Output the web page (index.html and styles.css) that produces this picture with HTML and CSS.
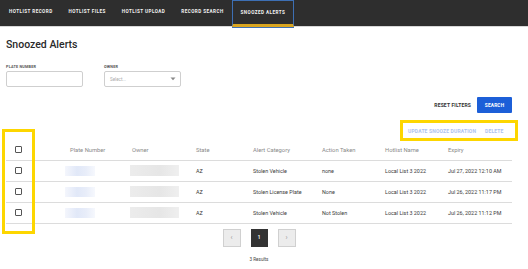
FILE: index.html
```html
<!DOCTYPE html>
<html lang="en">

<head>
    <meta charset="UTF-8">
    <meta name="viewport" content="width=device-width, initial-scale=1.0">
    <title>Snoozed Alerts</title>
    <link rel="stylesheet" href="styles.css">
</head>

<body>
    <!-- Top navigation -->
    <nav class="tabs">
        <a class="tab">HOTLIST RECORD</a>
        <a class="tab">HOTLIST FILES</a>
        <a class="tab">HOTLIST UPLOAD</a>
        <a class="tab">RECORD SEARCH</a>
        <a class="tab active">SNOOZED ALERTS</a>
    </nav>

    <div class="page">
        <h1 class="page-title">Snoozed Alerts</h1>

        <!-- Filters -->
        <div class="filters">
            <div class="field">
                <label for="plate">PLATE NUMBER</label>
                <input type="text" id="plate" class="text-input">
            </div>
            <div class="field">
                <label for="owner">OWNER</label>
                <div class="select-input" id="owner">
                    <span>Select...</span>
                    <svg width="6" height="4" viewBox="0 0 6 4"><path d="M0.5 0.5 L3 3.3 L5.5 0.5 Z" fill="#888"/></svg>
                </div>
            </div>
        </div>

        <div class="filter-actions">
            <button class="link-btn">RESET FILTERS</button>
            <button class="search-btn">SEARCH</button>
        </div>

        <div class="bulk-row">
            <div class="bulk-actions">
                <button class="bulk-btn">UPDATE SNOOZE DURATION</button>
                <button class="bulk-btn">DELETE</button>
            </div>
        </div>

        <!-- Results table -->
        <div class="table-wrap">
            <div class="select-highlight"></div>
            <table class="alerts">
                <colgroup>
                    <col style="width: 64px">
                    <col style="width: 62px">
                    <col style="width: 64px">
                    <col style="width: 57px">
                    <col style="width: 69px">
                    <col style="width: 63px">
                    <col style="width: 63px">
                    <col style="width: 64px">
                </colgroup>
                <thead>
                    <tr>
                        <th><span class="checkbox"></span></th>
                        <th>Plate Number</th>
                        <th>Owner</th>
                        <th>State</th>
                        <th>Alert Category</th>
                        <th>Action Taken</th>
                        <th>Hotlist Name</th>
                        <th>Expiry</th>
                    </tr>
                </thead>
                <tbody>
                    <tr>
                        <td><span class="checkbox"></span></td>
                        <td><span class="blur-plate"></span></td>
                        <td><span class="blur-owner"></span></td>
                        <td>AZ</td>
                        <td>Stolen Vehicle</td>
                        <td>none</td>
                        <td>Local List 3 2022</td>
                        <td>Jul 27, 2022 12:10 AM</td>
                    </tr>
                    <tr>
                        <td><span class="checkbox"></span></td>
                        <td><span class="blur-plate"></span></td>
                        <td><span class="blur-owner"></span></td>
                        <td>AZ</td>
                        <td>Stolen License Plate</td>
                        <td>None</td>
                        <td>Local List 3 2022</td>
                        <td>Jul 26, 2022 11:17 PM</td>
                    </tr>
                    <tr>
                        <td><span class="checkbox"></span></td>
                        <td><span class="blur-plate"></span></td>
                        <td><span class="blur-owner"></span></td>
                        <td>AZ</td>
                        <td>Stolen Vehicle</td>
                        <td>Not Stolen</td>
                        <td>Local List 3 2022</td>
                        <td>Jul 26, 2022 11:12 PM</td>
                    </tr>
                </tbody>
            </table>
        </div>

        <!-- Pagination -->
        <div class="pager">
            <button class="page-btn">&lsaquo;</button>
            <button class="page-btn current">1</button>
            <button class="page-btn">&rsaquo;</button>
        </div>
        <p class="results">3 Results</p>
    </div>
</body>

</html>
```

FILE: styles.css
```css
/* General Reset */
* {
    margin: 0;
    padding: 0;
    box-sizing: border-box;
}

body,
html {
    height: 100%;
    font-family: 'Roboto', 'Liberation Sans', sans-serif;
    background-color: #fff;
    color: #333;
    overflow: hidden;
}

/* Top navigation */
.tabs {
    display: flex;
    height: 27px;
    padding-left: 1px;
    background-color: #2e2e2e;
    border-bottom: 1px solid #d8d8d8;
}

.tab {
    display: flex;
    align-items: center;
    padding: 0 8px 1px;
    color: #f2f2f2;
    font-size: 4.6px;
    font-weight: 700;
    letter-spacing: 0.45px;
    border-bottom: 2px solid transparent;
}

.tab.active {
    padding: 0 8px;
    border: 1px solid #3d6fb3;
    border-bottom: 3px solid #d9a520;
    height: 27px;
    margin-bottom: -1px;
    box-shadow: 0 1px 0 #3d6fb3;
}

/* Page */
.page {
    padding: 11px 16px 0 6px;
}

.page-title {
    font-size: 10.5px;
    font-weight: 500;
    line-height: 14px;
    color: #2a2a2a;
    margin-bottom: 12px;
}

.filters {
    display: flex;
    gap: 21px;
}

.field label {
    display: block;
    font-size: 3.8px;
    font-weight: 700;
    color: #555;
    letter-spacing: 0.2px;
    line-height: 5px;
    margin-bottom: 2px;
}

.text-input,
.select-input {
    display: block;
    width: 77px;
    height: 16px;
    border: 1px solid #cfcfcf;
    border-radius: 2px;
    background: #fff;
}

.select-input {
    display: flex;
    align-items: center;
    justify-content: space-between;
    padding: 0 4px 0 5px;
    font-size: 4.5px;
    color: #aaa;
}

.filter-actions {
    display: flex;
    justify-content: flex-end;
    align-items: center;
    gap: 6px;
    margin-top: 10px;
}

.link-btn {
    border: none;
    background: none;
    font-family: inherit;
    font-size: 5px;
    font-weight: 700;
    color: #333;
    letter-spacing: 0.15px;
}

.search-btn {
    width: 35px;
    height: 16px;
    border: none;
    border-radius: 1px;
    background-color: #1c5fd8;
    color: #fff;
    font-family: inherit;
    font-size: 4.8px;
    font-weight: 700;
    letter-spacing: 0.15px;
}

.bulk-row {
    display: flex;
    justify-content: flex-end;
    margin: 7px -6px 0 0;
}

.bulk-actions {
    display: flex;
    align-items: center;
    gap: 9px;
    width: 118px;
    height: 21px;
    padding: 0 0 0 5px;
    border: 3px solid #fdd600;
}

.bulk-btn {
    border: none;
    background: none;
    font-family: inherit;
    font-size: 5px;
    font-weight: 700;
    color: #aec3ef;
    letter-spacing: 0.15px;
}

/* Table */
.table-wrap {
    position: relative;
    margin-top: -1px;
}

.select-highlight {
    position: absolute;
    left: -4px;
    top: -11px;
    width: 33px;
    height: 105px;
    border: 3px solid #fdd600;
    pointer-events: none;
}

.alerts {
    width: 506px;
    table-layout: fixed;
    border-collapse: collapse;
}

.alerts th {
    height: 20px;
    text-align: left;
    font-size: 5.8px;
    font-weight: 400;
    color: #8a8a8a;
    border-bottom: 1px solid #dcdcdc;
}

.alerts td {
    height: 21px;
    font-size: 5.4px;
    color: #3a3a3a;
    border-bottom: 1px solid #dcdcdc;
    white-space: nowrap;
}

.alerts th:first-child,
.alerts td:first-child {
    padding-left: 9px;
}

.checkbox {
    display: block;
    width: 7px;
    height: 7px;
    border: 1.3px solid #555;
    border-radius: 1px;
}

.blur-plate {
    display: block;
    width: 30px;
    height: 10px;
    margin-left: -5px;
    background: linear-gradient(90deg, #f4f6fc, #e1e8f8 40%, #e8edf9 70%, #f6f8fd);
    filter: blur(0.6px);
}

.blur-owner {
    display: block;
    width: 49px;
    height: 11px;
    margin-left: -2px;
    background: linear-gradient(90deg, #ececec, #e6e6e6 60%, #efefef);
    filter: blur(0.5px);
}

/* Pagination */
.pager {
    display: flex;
    justify-content: center;
    gap: 10px;
    width: 506px;
    margin-top: 5px;
}

.page-btn {
    width: 18px;
    height: 18px;
    border: 1px solid #d0d0d0;
    background-color: #ececec;
    color: #999;
    font-family: inherit;
    font-size: 7px;
}

.page-btn.current {
    width: 17px;
    background-color: #333;
    border-color: #333;
    color: #fff;
    font-size: 4.6px;
    font-weight: 700;
}

.results {
    width: 506px;
    margin-top: 10px;
    text-align: center;
    font-size: 4.6px;
    color: #444;
}
```
